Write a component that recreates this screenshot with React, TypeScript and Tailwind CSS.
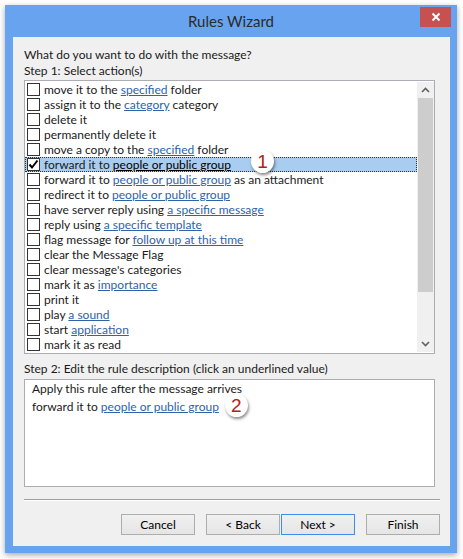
import React from 'react';

type Part = string | { link: string };

const actions: Part[][] = [
    ['move it to the ', { link: 'specified' }, ' folder'],
    ['assign it to the ', { link: 'category' }, ' category'],
    ['delete it'],
    ['permanently delete it'],
    ['move a copy to the ', { link: 'specified' }, ' folder'],
    ['forward it to ', { link: 'people or public group' }],
    ['forward it to ', { link: 'people or public group' }, ' as an attachment'],
    ['redirect it to ', { link: 'people or public group' }],
    ['have server reply using ', { link: 'a specific message' }],
    ['reply using ', { link: 'a specific template' }],
    ['flag message for ', { link: 'follow up at this time' }],
    ['clear the Message Flag'],
    ["clear message's categories"],
    ['mark it as ', { link: 'importance' }],
    ['print it'],
    ['play ', { link: 'a sound' }],
    ['start ', { link: 'application' }],
    ['mark it as read'],
];

const SELECTED = 5;

const Badge = ({ n }: { n: string }) => (
    <div className="w-[23px] h-[23px] rounded-full bg-white flex items-center justify-center shadow-[1px_2px_3px_rgba(0,0,0,0.45)] text-[#b3201c] text-[19px] leading-none font-['Liberation_Sans',sans-serif]">
        {n}
    </div>
);

const Checkbox = ({ checked }: { checked: boolean }) => (
    <div className="w-[13px] h-[13px] border border-[#333333] bg-white shrink-0 flex items-center justify-center">
        {checked && (
            <svg width="11" height="11" viewBox="0 0 11 11">
                <path d="M1.5 5.5 L4 8.5 L9.5 1.5" fill="none" stroke="#000" strokeWidth="2" />
            </svg>
        )}
    </div>
);

const Row = ({ parts, selected }: { parts: Part[]; selected: boolean }) => (
    <div
        className={
            selected
                ? 'h-[15px] flex items-center pl-[2px] bg-[#a8cdf0] outline outline-1 outline-dotted outline-[#333] -outline-offset-1'
                : 'h-[15px] flex items-center pl-[2px]'
        }
    >
        <Checkbox checked={selected} />
        <span className="ml-[4px] whitespace-pre leading-[14px]">
            {parts.map((p, i) =>
                typeof p === 'string' ? (
                    <span key={i}>{p}</span>
                ) : (
                    <span key={i} className={selected ? 'underline text-black' : 'underline text-[#2e63a8]'}>
                        {p.link}
                    </span>
                )
            )}
        </span>
    </div>
);

const WizButton = ({ label, focused }: { label: string; focused?: boolean }) => (
    <button
        className={
            focused
                ? 'w-[74px] h-[21px] border border-[#3c8ee6] bg-gradient-to-b from-[#f0f0f0] to-[#e5e5e5] text-[12px] leading-none text-black'
                : 'w-[74px] h-[21px] border border-[#adadad] bg-gradient-to-b from-[#f0f0f0] to-[#e5e5e5] text-[12px] leading-none text-black'
        }
    >
        {label}
    </button>
);

const Chevron = ({ down }: { down?: boolean }) => (
    <svg width="9" height="6" viewBox="0 0 9 6">
        <path d={down ? 'M1 1 L4.5 4.5 L8 1' : 'M1 5 L4.5 1.5 L8 5'} fill="none" stroke="#606060" strokeWidth="1.6" />
    </svg>
);

export default function App() {
    return (
        <div className="w-[463px] h-[559px] bg-white pt-[5px] pl-[5px] font-['Lato',sans-serif] text-[12px] text-[#1a1a1a]">
            <div className="w-[452px] h-[548px] bg-[#67a3ef] shadow-[0_2px_6px_rgba(0,0,0,0.35)] flex flex-col">
                {/* title bar */}
                <div className="h-[32px] relative flex items-center justify-center">
                    <span className="text-[15px] text-[#2b2b2b] pt-[1px]">Rules Wizard</span>
                    <div className="absolute right-[6px] top-[2px] w-[31px] h-[20px] bg-[#c75050] flex items-center justify-center">
                        <svg width="10" height="10" viewBox="0 0 10 10">
                            <path d="M1.5 1.5 L8.5 8.5 M8.5 1.5 L1.5 8.5" stroke="#fff" strokeWidth="2" />
                        </svg>
                    </div>
                </div>

                {/* dialog body */}
                <div className="ml-[8px] mr-[7px] h-[509px] bg-[#f0f0f0] pl-[11px] pr-[10px] pt-[10px] flex flex-col">
                    <div className="leading-[16px]">What do you want to do with the message?</div>
                    <div className="leading-[16px]">Step 1: Select action(s)</div>

                    <div className="mt-[1px] w-[411px] h-[274px] border border-[#abadb3] bg-white flex relative">
                        <div className="flex-1 pt-[1px]">
                            {actions.map((parts, i) => (
                                <Row key={i} parts={parts} selected={i === SELECTED} />
                            ))}
                        </div>
                        <div className="w-[17px] bg-[#f0f0f0] flex flex-col mt-[1px] mb-[1px]">
                            <div className="h-[16px] flex items-center justify-center">
                                <Chevron />
                            </div>
                            <div className="mx-[1px] h-[194px] bg-[#cdcdcd]" />
                            <div className="flex-1" />
                            <div className="h-[16px] flex items-center justify-center">
                                <Chevron down />
                            </div>
                        </div>
                        <div className="absolute left-[226px] top-[69px]">
                            <Badge n="1" />
                        </div>
                    </div>

                    <div className="mt-[7px] leading-[16px]">Step 2: Edit the rule description (click an underlined value)</div>
                    <div className="mt-[2px] w-[411px] h-[108px] border border-[#abadb3] bg-white pl-[7px] pt-[1px] leading-[15px] relative">
                        <div>Apply this rule after the message arrives</div>
                        <div className="flex items-center">
                            <span className="whitespace-pre">forward it to </span>
                            <span className="underline text-[#2e63a8]">people or public group</span>
                            <div className="ml-[6px] -mt-[2px]">
                                <Badge n="2" />
                            </div>
                        </div>
                    </div>

                    <div className="mt-[12px] h-[1px] bg-[#a0a0a0] w-[416px]" />
                    <div className="h-[1px] bg-white w-[416px]" />

                    <div className="mt-[13px] flex justify-end">
                        <WizButton label="Cancel" />
                        <div className="w-[11px]" />
                        <WizButton label="< Back" />
                        <div className="w-[1px]" />
                        <WizButton label="Next >" focused />
                        <div className="w-[11px]" />
                        <WizButton label="Finish" />
                    </div>
                </div>
            </div>
        </div>
    );
}
